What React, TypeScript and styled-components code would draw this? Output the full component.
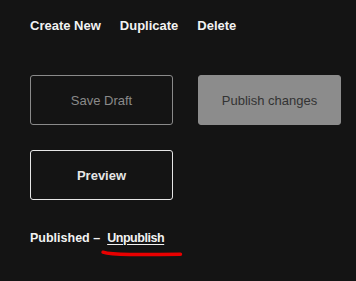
import React from "react";
import styled, { createGlobalStyle } from "styled-components";

const Global = createGlobalStyle`
  html, body { margin: 0; padding: 0; background: #141414; }
  body { font-family: "Liberation Sans", Arial, sans-serif; }
`;

const Page = styled.div`
  padding: 17px 30px 0 30px;
  display: flex;
  flex-direction: column;
`;

const Nav = styled.nav`
  display: flex;
  gap: 19px;
  height: 16px;
  align-items: center;
`;

const NavLink = styled.a`
  color: #f2f2f2;
  font-weight: 700;
  font-size: 13px;
  cursor: pointer;
`;

const ButtonGrid = styled.div`
  margin-top: 42px;
  display: grid;
  grid-template-columns: 143px 143px;
  column-gap: 25px;
  row-gap: 25px;
`;

const Button = styled.button<{ $variant: "outline" | "filled" | "primary" }>`
  height: 50px;
  border-radius: 3px;
  font-family: "Liberation Sans", Arial, sans-serif;
  font-size: 13px;
  padding: 0;
  background: ${(p) => (p.$variant === "filled" ? "#8c8c8c" : "transparent")};
  border: 1px solid
    ${(p) =>
      p.$variant === "filled" ? "#8c8c8c" : p.$variant === "primary" ? "#e6e6e6" : "#8a8a8a"};
  color: ${(p) =>
    p.$variant === "filled" ? "#333333" : p.$variant === "primary" ? "#e6e6e6" : "#8a8a8a"};
  font-weight: ${(p) => (p.$variant === "primary" ? 700 : 400)};
`;

const Status = styled.div`
  margin-top: 31px;
  color: #f2f2f2;
  font-weight: 700;
  font-size: 12.5px;
  display: flex;
  align-items: baseline;
  gap: 7px;
`;

const UnpublishWrap = styled.span`
  display: inline-flex;
  flex-direction: column;
  align-items: flex-start;
`;

const Unpublish = styled.a`
  color: #f2f2f2;
  text-decoration: underline;
  text-underline-offset: 2px;
  letter-spacing: -0.45px;
  cursor: pointer;
`;

const Scribble = styled.svg`
  display: block;
  margin-top: 6px;
  margin-left: -5px;
  overflow: visible;
`;

export default function App() {
  return (
    <>
      <Global />
      <Page>
        <Nav>
          <NavLink>Create New</NavLink>
          <NavLink>Duplicate</NavLink>
          <NavLink>Delete</NavLink>
        </Nav>
        <ButtonGrid>
          <Button $variant="outline">Save Draft</Button>
          <Button $variant="filled">Publish changes</Button>
          <Button $variant="primary">Preview</Button>
        </ButtonGrid>
        <Status>
          <span>Published –</span>
          <UnpublishWrap>
            <Unpublish>Unpublish</Unpublish>
            <Scribble width="80" height="6" viewBox="0 0 80 6">
              <path
                d="M1 1.2 C 5 2.6, 12 3.4, 28 3.5 C 48 3.6, 65 3.4, 78.5 3.2"
                stroke="#e80000"
                strokeWidth="3.4"
                strokeLinecap="round"
                fill="none"
              />
            </Scribble>
          </UnpublishWrap>
        </Status>
      </Page>
    </>
  );
}
